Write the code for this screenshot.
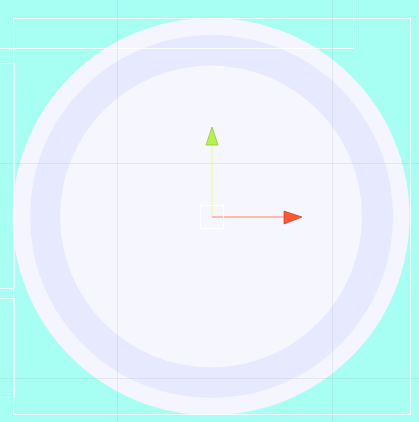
export default function App() {
  return (
    <main className="relative h-[422px] w-[419px] overflow-hidden bg-[#a6fff2]">
      <svg width="419" height="422" viewBox="0 0 419 422" className="absolute inset-0">
        {/* scene disc */}
        <circle cx="211" cy="216.5" r="198.5" fill="#f5f5ff" />
        <circle cx="211.5" cy="216.5" r="181.5" fill="#e6e9ff" />
        <circle cx="211" cy="216.5" r="151" fill="#f6f6ff" />

        {/* grid */}
        <g stroke="#8a9a9a" strokeOpacity="0.15" strokeWidth="1">
          <line x1="117.5" y1="0" x2="117.5" y2="422" />
          <line x1="332.5" y1="0" x2="332.5" y2="422" />
          <line x1="0" y1="163.5" x2="419" y2="163.5" />
          <line x1="0" y1="378.5" x2="419" y2="378.5" />
        </g>

        {/* selection outlines */}
        <g stroke="#ffffff" strokeOpacity="0.8" strokeWidth="1" fill="none">
          <rect x="13.5" y="18.5" width="397" height="396" />
          <polyline points="0,48.5 353.5,48.5 353.5,0" />
          <polyline points="0,63.5 14.5,63.5 14.5,288.5 0,288.5" />
          <polyline points="0,298.5 14.5,298.5 14.5,397.5 0,397.5" />
        </g>

        {/* transform gizmo */}
        <line x1="212" y1="144" x2="212" y2="217" stroke="#e4ff8c" strokeWidth="1" />
        <line x1="212" y1="217" x2="284" y2="217" stroke="#ffa890" strokeWidth="1.3" />
        <rect x="200.5" y="205.5" width="23" height="23" fill="none" stroke="#ffffff" strokeWidth="1.2" />
        <polygon points="212,127 206,145 218,145" fill="#b6f24c" stroke="#7fb52a" strokeWidth="0.6" />
        <polygon points="302,217 284,211 284,224" fill="#ff5533" stroke="#b83418" strokeWidth="0.6" />
      </svg>
    </main>
  )
}
